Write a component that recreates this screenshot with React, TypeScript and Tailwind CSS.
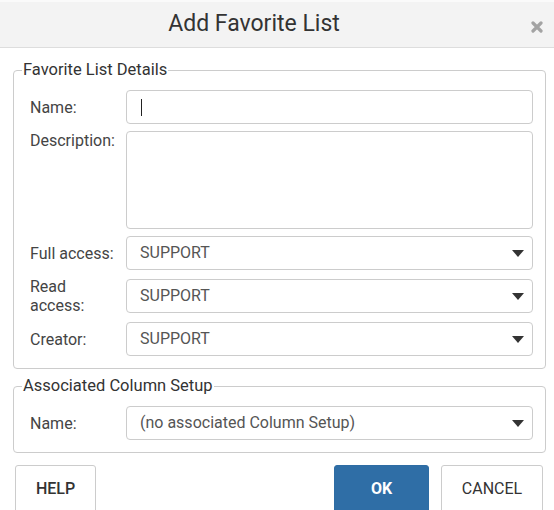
import React from 'react';

const Caret = () => (
  <svg width="12" height="7" viewBox="0 0 12 7" className="shrink-0">
    <path d="M0 0 L12 0 L6 7 Z" fill="#333" />
  </svg>
);

const Row = ({ label, children, top }: { label: React.ReactNode; children: React.ReactNode; top?: boolean }) => (
  <div className={`flex ${top ? 'items-start' : 'items-center'}`}>
    <div className="w-[96px] shrink-0 text-[16px] leading-[19px] text-[#444]">{label}</div>
    {children}
  </div>
);

const Select = ({ value }: { value: string }) => (
  <div className="flex h-[34px] flex-1 items-center justify-between rounded-[4px] border border-[#ccc] pl-[13px] pr-[8px] text-[16px] text-[#555]">
    <span>{value}</span>
    <Caret />
  </div>
);

const App = () => {
  return (
    <div className="h-[510px] w-[554px] overflow-hidden bg-white font-['Roboto',sans-serif]">
      {/* header */}
      <div className="relative flex h-[48px] items-center justify-center border-b border-t-[2px] border-b-[#ddd] border-t-[#fafafa] bg-[#f3f3f3] pr-[46px]">
        <h1 className="text-[23px] text-[#333]">Add Favorite List</h1>
        <svg className="absolute right-[11px] top-[19px]" width="12" height="12" viewBox="0 0 12 12">
          <path d="M2 2 L10 10 M10 2 L2 10" stroke="#a3a3a3" strokeWidth="3.2" strokeLinecap="round" />
        </svg>
      </div>

      {/* details */}
      <fieldset className="ml-[13px] mr-[8px] mt-[12px] rounded-[4px] border border-[#ccc] pb-[12px] pl-[16px] pr-[12px]">
        <legend className="ml-[-8px] px-[1px] text-[16.5px] leading-[20px] text-[#333]">Favorite List Details</legend>
        <div className="mt-[10px] flex flex-col gap-[7px]">
          <Row label="Name:">
            <div className="flex h-[34px] flex-1 items-center rounded-[4px] border border-[#ccc] pl-[14px]">
              <span className="h-[17px] w-[1px] bg-[#222]" />
            </div>
          </Row>
          <Row label="Description:" top>
            <div className="h-[98px] flex-1 rounded-[4px] border border-[#ccc]" />
          </Row>
          <Row label="Full access:">
            <Select value="SUPPORT" />
          </Row>
          <Row label={<>Read<br />access:</>}>
            <Select value="SUPPORT" />
          </Row>
          <Row label="Creator:">
            <Select value="SUPPORT" />
          </Row>
        </div>
      </fieldset>

      {/* column setup */}
      <fieldset className="ml-[13px] mr-[8px] mt-[7px] rounded-[4px] border border-[#ccc] pb-[12px] pl-[16px] pr-[12px]">
        <legend className="ml-[-8px] px-[1px] text-[16.5px] leading-[20px] text-[#333]">Associated Column Setup</legend>
        <div className="mt-[10px]">
          <Row label="Name:">
            <Select value="(no associated Column Setup)" />
          </Row>
        </div>
      </fieldset>

      {/* buttons */}
      <div className="mt-[12px] flex items-start pl-[15px] pr-[11px]">
        <button className="h-[48px] w-[81px] rounded-[3px] border border-[#ccc] bg-white text-[16px] font-medium text-[#333]">HELP</button>
        <div className="flex-1" />
        <button className="h-[48px] w-[95px] rounded-[3px] border border-[#2e6da4] bg-[#2f6ea6] text-[16px] font-bold text-white">OK</button>
        <button className="ml-[12px] h-[48px] w-[102px] rounded-[3px] border border-[#ccc] bg-white text-[16px] text-[#333]">CANCEL</button>
      </div>
    </div>
  );
};

export default App;
